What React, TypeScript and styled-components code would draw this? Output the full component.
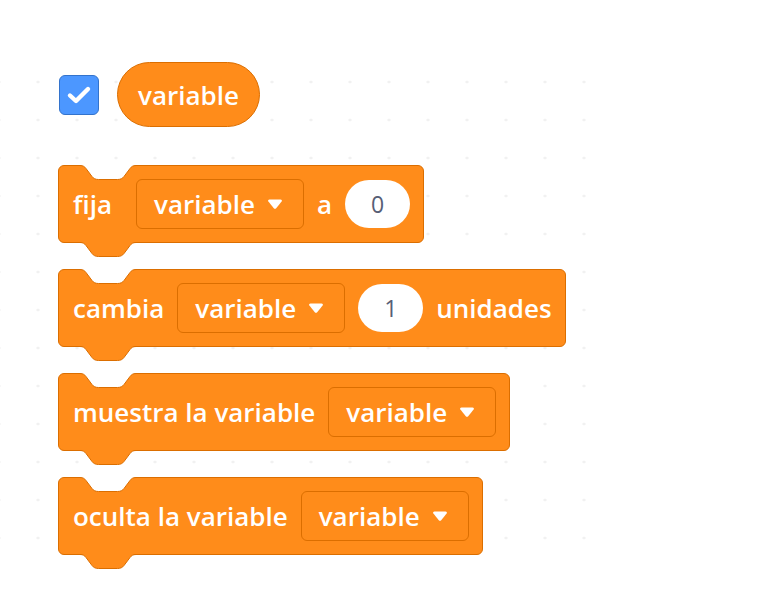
import React from "react";
import styled, { createGlobalStyle } from "styled-components";

const GlobalStyle = createGlobalStyle`
  html, body { margin: 0; padding: 0; background: #ffffff; }
  body { font-family: "Open Sans", "Liberation Sans", sans-serif; }
`;

const ORANGE = "#FF8C1A";
const ORANGE_DARK = "#DB6E00";

const Page = styled.div`
  width: 768px;
  height: 594px;
  box-sizing: border-box;
  padding: 62px 0 0 58px;
  display: flex;
  flex-direction: column;
  background:
    linear-gradient(#fff, #fff) left top / 100% 66px no-repeat,
    linear-gradient(#fff, #fff) right top / 170px 100% no-repeat,
    linear-gradient(#fff, #fff) left bottom / 100% 40px no-repeat,
    radial-gradient(circle, rgba(0, 0, 0, 0.055) 1.1px, transparent 1.8px) 18.5px 25px / 39px 38px;
`;

const VarRow = styled.div`
  display: flex;
  align-items: center;
  gap: 18px;
  margin-bottom: 38px;
`;

const CheckBox = styled.div`
  width: 40px;
  height: 40px;
  margin-left: 1px;
  box-sizing: border-box;
  border-radius: 6px;
  background: #4c97ff;
  border: 1px solid #3373cc;
  display: flex;
  align-items: center;
  justify-content: center;
`;

const Reporter = styled.div`
  height: 65px;
  box-sizing: border-box;
  padding: 0 20px;
  border-radius: 33px;
  background: ${ORANGE};
  border: 1px solid ${ORANGE_DARK};
  display: flex;
  align-items: center;
`;

const Label = styled.span<{ $extra?: number }>`
  color: #ffffff;
  font-size: 26px;
  font-weight: 600;
  line-height: 1;
  white-space: nowrap;
  margin-right: ${(p) => p.$extra ?? 0}px;
`;

const Stack = styled.div`
  display: flex;
  flex-direction: column;
  align-items: flex-start;
  gap: 26px;
`;

const Block = styled.div`
  position: relative;
  display: flex;
  align-items: center;
  height: 78px;
  box-sizing: border-box;
  padding: 0 13px 0 14px;
  gap: 13px;
  background: ${ORANGE};
  border: 1px solid ${ORANGE_DARK};
  border-radius: 6px;
`;

const Notch = styled.svg`
  position: absolute;
  left: 21px;
  top: -1.5px;
  width: 56px;
  height: 15px;
  overflow: visible;
`;

const Tab = styled.svg`
  position: absolute;
  left: 21px;
  top: calc(100% - 0.5px);
  width: 56px;
  height: 15px;
  overflow: visible;
`;

const Dropdown = styled.div`
  display: flex;
  align-items: center;
  gap: 12px;
  height: 50px;
  box-sizing: border-box;
  padding: 0 20px 0 17px;
  background: ${ORANGE};
  border: 1px solid ${ORANGE_DARK};
  border-radius: 6px;
`;

const NumberInput = styled.div`
  width: 65px;
  height: 48px;
  box-sizing: border-box;
  border-radius: 24px;
  background: #ffffff;
  display: flex;
  align-items: center;
  justify-content: center;
  color: #575e75;
  font-size: 23px;
  font-weight: 500;
`;

const TAB_PATH =
  "M0,0.5 C3,0.5 4.5,1.5 6,3.5 L12,11.5 C13.5,13.5 15.5,14.5 18.5,14.5 H37.5 C40.5,14.5 42.5,13.5 44,11.5 L50,3.5 C51.5,1.5 53,0.5 56,0.5";

const NotchShape = () => (
  <Notch viewBox="0 0 56 15">
    <path d={TAB_PATH + " V0 H0 Z"} fill="#ffffff" />
    <path d={TAB_PATH} fill="none" stroke={ORANGE_DARK} strokeWidth="1" />
  </Notch>
);

const TabShape = () => (
  <Tab viewBox="0 0 56 15">
    <path d={TAB_PATH + " V0 H0 Z"} fill={ORANGE} />
    <path d={TAB_PATH} fill="none" stroke={ORANGE_DARK} strokeWidth="1" />
  </Tab>
);

const Caret = () => (
  <svg width="16" height="12" viewBox="0 0 16 12">
    <path
      d="M2.5,1.5 H13.5 C14.8,1.5 15.3,2.6 14.6,3.6 L9.2,10.2 C8.6,10.9 7.4,10.9 6.8,10.2 L1.4,3.6 C0.7,2.6 1.2,1.5 2.5,1.5 Z"
      fill="#ffffff"
    />
  </svg>
);

const VarDropdown = () => (
  <Dropdown>
    <Label>variable</Label>
    <Caret />
  </Dropdown>
);

const StackBlock = ({ children }: { children: React.ReactNode }) => (
  <Block>
    <NotchShape />
    {children}
    <TabShape />
  </Block>
);

export default function App() {
  return (
    <>
      <GlobalStyle />
      <Page>
        <VarRow>
          <CheckBox>
            <svg width="26" height="22" viewBox="0 0 26 22">
              <polyline
                points="4,11.5 10,17 22,5"
                fill="none"
                stroke="#ffffff"
                strokeWidth="4.4"
                strokeLinecap="round"
                strokeLinejoin="round"
              />
            </svg>
          </CheckBox>
          <Reporter>
            <Label>variable</Label>
          </Reporter>
        </VarRow>
        <Stack>
          <StackBlock>
            <Label $extra={11}>fija</Label>
            <VarDropdown />
            <Label>a</Label>
            <NumberInput>0</NumberInput>
          </StackBlock>
          <StackBlock>
            <Label>cambia</Label>
            <VarDropdown />
            <NumberInput>1</NumberInput>
            <Label>unidades</Label>
          </StackBlock>
          <StackBlock>
            <Label>muestra la variable</Label>
            <VarDropdown />
          </StackBlock>
          <StackBlock>
            <Label>oculta la variable</Label>
            <VarDropdown />
          </StackBlock>
        </Stack>
      </Page>
    </>
  );
}
